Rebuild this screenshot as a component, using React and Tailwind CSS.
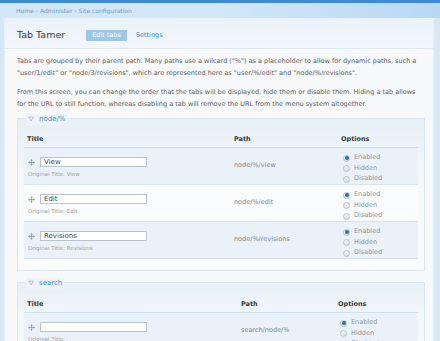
import React from 'react';

const Handle = () => (
    <svg width="7" height="7" viewBox="0 0 10 10" className="shrink-0">
        <path d="M5 0 L7 2.5 H5.6 V4.4 H7.5 V3 L10 5 L7.5 7 V5.6 H5.6 V7.5 H7 L5 10 L3 7.5 H4.4 V5.6 H2.5 V7 L0 5 L2.5 3 V4.4 H4.4 V2.5 H3 Z" fill="#9aa4ad" />
    </svg>
);

const Radio = ({ checked, label }) => (
    <div className="flex items-center gap-[4px] h-[10.5px]">
        <span className="w-[7px] h-[7px] rounded-full border border-[#b9c2ca] bg-gradient-to-b from-[#f4f6f8] to-[#d8dee4] flex items-center justify-center">
            {checked && <span className="w-[4px] h-[4px] rounded-full bg-[#2c6ea8]"></span>}
        </span>
        <span className="text-[6.5px] text-[#8f9499]">{label}</span>
    </div>
);

const Row = ({ value, original, path, odd, cols }) => (
    <div className={`grid ${cols} h-[37px] border-b border-[#d6e4f0] ${odd ? 'bg-[#eaf1f8]' : 'bg-[#f9fbfc]'}`}>
        <div className="pl-[4px] pt-[9px]">
            <div className="flex items-center gap-[5px]">
                <Handle />
                <div className="w-[107px] h-[10px] bg-white border border-[#b8c4ce] text-[7px] text-[#444] leading-[8px] pl-[3px]">{value}</div>
            </div>
            <div className="text-[5.5px] text-[#9ea2a7] mt-[3px]">Original Title: {original}</div>
        </div>
        <div className="pl-[3px] flex items-center text-[6.5px] text-[#81868b]">{path}</div>
        <div className="pl-[5px] pt-[5px]">
            <Radio checked label="Enabled" />
            <Radio label="Hidden" />
            <Radio label="Disabled" />
        </div>
    </div>
);

const Legend = ({ children }) => (
    <div className="absolute -top-[5px] left-[8px] flex items-center gap-[5px] px-[2px] bg-[#edf3f9]">
        <svg width="6" height="6" viewBox="0 0 6 6"><path d="M0.5 1 H5.5 L3 5 Z" fill="none" stroke="#b0bac3" strokeWidth="0.8" /></svg>
        <span className="text-[7px] text-[#3a87cc]">{children}</span>
    </div>
);

export default function App() {
    const cols1 = 'grid-cols-[207px_107px_1fr]';
    const cols2 = 'grid-cols-[214px_97px_1fr]';
    return (
        <div className="w-[440px] h-[341px] overflow-hidden bg-[#d6e7f5] font-['DejaVu_Sans',sans-serif]">
            <div className="h-[3px] bg-[#3d8ad6]"></div>
            <div className="h-[15px] bg-gradient-to-r from-[#d3e7f7] via-[#d3e7f7] to-[#b7d8f3] flex items-center pl-[16px]">
                <span className="text-[6px] text-[#6b9bcb]">Home › Administer › Site configuration</span>
            </div>
            <div className="mx-[4px] w-[430px] bg-[#f6f8fa] border-l border-r border-[#e8f1f9]">
                {/* header */}
                <div className="h-[31px] bg-gradient-to-b from-[#eaf2f9] to-[#f3f6f9] border-b border-[#dfe7ee] flex items-center pl-[12px] pt-[5px]">
                    <span className="text-[9.5px] text-[#3a3a3a]">Tab Tamer</span>
                    <span className="ml-[21px] h-[11px] px-[6px] flex items-center bg-[#9cc7ea] text-white text-[6.5px]">Edit tabs</span>
                    <span className="ml-[9px] text-[6.5px] text-[#3a83c8]">Settings</span>
                </div>

                <div className="px-[12px] pt-[6px] text-[6.5px] text-[#5c5c5c] leading-[12px] whitespace-nowrap">
                    <p>Tabs are grouped by their parent path. Many paths use a wilcard ("%") as a placeholder to allow for dynamic paths, such a<br />"user/1/edit" or "node/3/revisions", which are represented here as "user/%/edit" and "node/%/revisions".</p>
                    <p className="mt-[7px]">From this screen, you can change the order that the tabs will be displayed, hide them or disable them. Hiding a tab allows<br />for the URL to still function, whereas disabling a tab will remove the URL from the menu system altogether.</p>
                </div>

                {/* fieldset node/% */}
                <div className="relative mt-[8px] mx-[12px] w-[408px] h-[153px] border border-[#dde7f0] bg-gradient-to-b from-[#e7f0f8] via-[#f7f9fb] to-[#f9fbfc] px-[6px] pt-[14px]">
                    <Legend>node/%</Legend>
                    <div className={`grid ${cols1} h-[15px] border-b border-[#cfe0ef] text-[6.5px] font-bold text-[#3a3a3a] items-center`}>
                        <div className="pl-[3px]">Title</div>
                        <div className="pl-[3px]">Path</div>
                        <div className="pl-[3px]">Options</div>
                    </div>
                    <Row cols={cols1} odd value="View" original="View" path="node/%/view" />
                    <Row cols={cols1} value="Edit" original="Edit" path="node/%/edit" />
                    <Row cols={cols1} odd value="Revisions" original="Revisions" path="node/%/revisions" />
                </div>

                {/* fieldset search */}
                <div className="relative mt-[11px] mx-[12px] w-[408px] h-[80px] border border-[#dde7f0] bg-gradient-to-b from-[#e7f0f8] via-[#f3f7fa] to-[#f9fbfc] px-[6px] pt-[15px]">
                    <Legend>search</Legend>
                    <div className={`grid ${cols2} h-[15px] border-b border-[#cfe0ef] text-[6.5px] font-bold text-[#3a3a3a] items-center`}>
                        <div className="pl-[3px]">Title</div>
                        <div className="pl-[3px]">Path</div>
                        <div className="pl-[3px]">Options</div>
                    </div>
                    <Row cols={cols2} odd value="" original="" path="search/node/%" />
                </div>
            </div>
        </div>
    );
}
